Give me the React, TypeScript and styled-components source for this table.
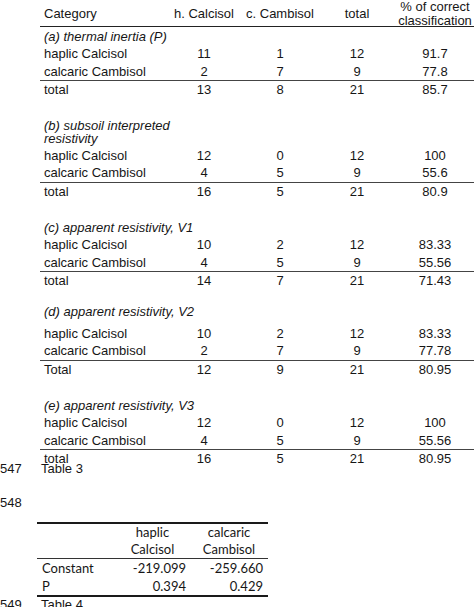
import React from 'react';
import styled, { createGlobalStyle, css } from 'styled-components';

const GlobalStyle = createGlobalStyle`
  html, body {
    margin: 0;
    padding: 0;
    background: #fff;
  }
  body {
    font-family: "Liberation Sans", Arial, sans-serif;
    color: #161616;
    overflow: hidden;
  }
`;

const Page = styled.div`
  width: 474px;
  height: 607px;
  overflow: hidden;
`;

const ClassTable = styled.div`
  margin-left: 40px;
  font-size: 13px;
`;

const cols = css`
  display: grid;
  grid-template-columns: 126px 76px 76px 78px 78px;
`;

const HeadRow = styled.div`
  ${cols}
  height: 26px;
  border-bottom: 1.5px solid #222;
  align-items: center;
`;

const HeadCell: any = styled.div`
  text-align: center;
  line-height: 14px;
  white-space: nowrap;

  ${(props: any) => props.first && css`
    text-align: left;
    padding-left: 4px;
  `}

  ${(props: any) => props.tall && css`
    align-self: end;
    margin-bottom: -1px;
  `}
`;

const Group: any = styled.div`
  margin-top: ${(props: any) => props.gap}px;
`;

const Label: any = styled.div`
  font-style: italic;
  line-height: 13px;
  padding: 3px 0 ${(props: any) => props.pb ?? 2}px 4px;
  width: 168px;
`;

const Row: any = styled.div`
  ${cols}
  height: 17.5px;
  line-height: 17.5px;

  ${(props: any) => props.total && css`
    border-top: 1.5px solid #444;
  `}
`;

const Cell: any = styled.div`
  text-align: center;
  white-space: nowrap;

  ${(props: any) => props.first && css`
    text-align: left;
    padding-left: 4px;
  `}
`;

const Caption: any = styled.div`
  display: flex;
  font-size: 13px;
  line-height: 15px;
  margin-top: ${(props: any) => props.mt ?? 0}px;
`;

const LineNo = styled.div`
  width: 17px;
  text-align: right;
  flex: none;
`;

const CaptionText = styled.div`
  padding-left: 24px;
`;

const CoefTable = styled.div`
  margin: 12px 0 0 37px;
  width: 231px;
  border-top: 2px solid #1a1a1a;
  border-bottom: 2px solid #1a1a1a;
  font-family: Lato, "Open Sans", sans-serif;
  font-size: 13px;
`;

const coefCols = css`
  display: grid;
  grid-template-columns: 78px 75px 78px;
`;

const CoefHead = styled.div`
  ${coefCols}
  border-bottom: 1px solid #333;
  padding: 0;
`;

const CoefHeadCell = styled.div`
  text-align: center;
  line-height: 17px;
`;

const CoefRow = styled.div`
  ${coefCols}
  line-height: 18px;
`;

const CoefCell: any = styled.div`
  text-align: right;
  padding-right: ${(props: any) => props.pr ?? 5}px;

  ${(props: any) => props.first && css`
    text-align: left;
    padding: 0 0 0 5px;
  `}
`;

const groups = [
  { label: '(a) thermal inertia (P)', gap: 0, pb: 2, rows: [['11', '1', '12', '91.7'], ['2', '7', '9', '77.8']], total: ['total', '13', '8', '21', '85.7'] },
  { label: '(b) subsoil interpreted resistivity', gap: 17, pb: 2, rows: [['12', '0', '12', '100'], ['4', '5', '9', '55.6']], total: ['total', '16', '5', '21', '80.9'] },
  { label: '(c) apparent resistivity, V1', gap: 18, pb: 2, rows: [['10', '2', '12', '83.33'], ['4', '5', '9', '55.56']], total: ['total', '14', '7', '21', '71.43'] },
  { label: '(d) apparent resistivity, V2', gap: 12, pb: 7, rows: [['10', '2', '12', '83.33'], ['2', '7', '9', '77.78']], total: ['Total', '12', '9', '21', '80.95'] },
  { label: '(e) apparent resistivity, V3', gap: 18, pb: 2, rows: [['12', '0', '12', '100'], ['4', '5', '9', '55.56']], total: ['total', '16', '5', '21', '80.95'] },
];

const soils = ['haplic Calcisol', 'calcaric Cambisol'];

export default function App() {
  return (
    <Page>
      <GlobalStyle />
      <ClassTable>
        <HeadRow>
          <HeadCell first>Category</HeadCell>
          <HeadCell>h. Calcisol</HeadCell>
          <HeadCell>c. Cambisol</HeadCell>
          <HeadCell>total</HeadCell>
          <HeadCell tall>% of correct<br />classification</HeadCell>
        </HeadRow>
        {groups.map((g, i) => (
          <Group key={i} gap={g.gap}>
            <Label pb={g.pb}>{g.label}</Label>
            {g.rows.map((r, j) => (
              <Row key={j}>
                <Cell first>{soils[j]}</Cell>
                {r.map((v, k) => <Cell key={k}>{v}</Cell>)}
              </Row>
            ))}
            <Row total>
              {g.total.map((v, k) => <Cell key={k} first={k === 0}>{v}</Cell>)}
            </Row>
          </Group>
        ))}
      </ClassTable>

      <Caption mt={-7}>
        <LineNo>547</LineNo>
        <CaptionText>Table 3</CaptionText>
      </Caption>
      <Caption mt={19}>
        <LineNo>548</LineNo>
      </Caption>

      <CoefTable>
        <CoefHead>
          <div />
          <CoefHeadCell>haplic<br />Calcisol</CoefHeadCell>
          <CoefHeadCell>calcaric<br />Cambisol</CoefHeadCell>
        </CoefHead>
        <CoefRow>
          <CoefCell first>Constant</CoefCell>
          <CoefCell pr={4}>-219.099</CoefCell>
          <CoefCell>-259.660</CoefCell>
        </CoefRow>
        <CoefRow>
          <CoefCell first>P</CoefCell>
          <CoefCell pr={4}>0.394</CoefCell>
          <CoefCell>0.429</CoefCell>
        </CoefRow>
      </CoefTable>
      <Caption>
        <LineNo>549</LineNo>
        <CaptionText>Table 4</CaptionText>
      </Caption>
    </Page>
  );
}
